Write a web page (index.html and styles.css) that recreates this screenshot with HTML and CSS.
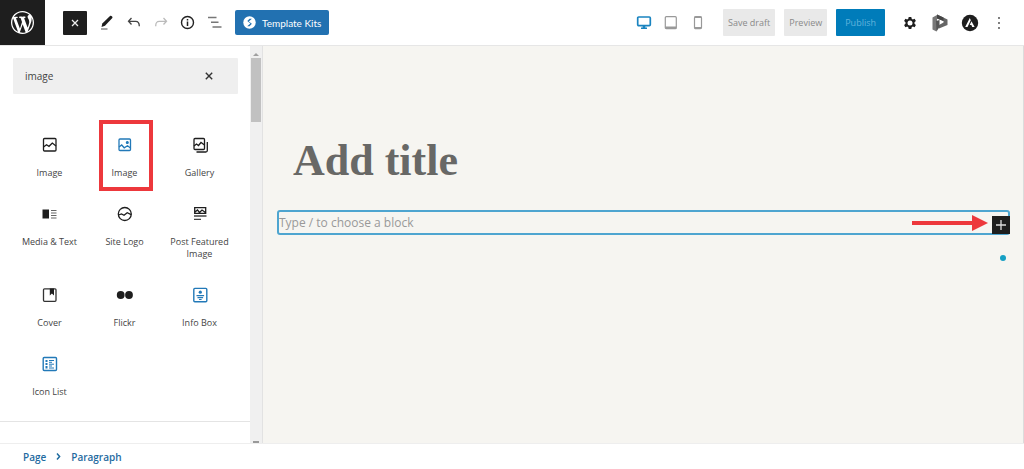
FILE: index.html
```html
<!DOCTYPE html>
<html lang="en">
<head>
  <meta charset="UTF-8">
  <meta name="viewport" content="width=device-width, initial-scale=1">
  <title>Edit Page</title>
  <link rel="stylesheet" href="styles.css">
</head>
<body>

<!-- Top toolbar -->
<header class="toolbar">
  <a href="#" class="wp-logo" aria-label="View pages">
    <svg width="23" height="23" viewBox="0 0 20 20" fill="#fff"><path d="M20 10c0-5.510-4.490-10-10-10C4.480 0 0 4.490 0 10c0 5.520 4.480 10 10 10 5.510 0 10-4.480 10-10zM7.780 15.370L4.370 6.220c.55-.02 1.170-.08 1.170-.08.5-.06.44-1.130-.06-1.110 0 0-1.450.11-2.370.11-.18 0-.37 0-.58-.01C4.120 2.690 6.870 1.110 10 1.110c2.330 0 4.450.87 6.050 2.340-.68-.11-1.650.39-1.650 1.580 0 .74.45 1.360.9 2.100.35.61.55 1.360.55 2.460 0 1.490-1.400 5-1.400 5l-3.030-8.370c.54-.02.82-.17.82-.17.5-.05.44-1.250-.06-1.220 0 0-1.440.12-2.380.12-.87 0-2.330-.12-2.330-.12-.5-.03-.56 1.200-.06 1.220l.92.08 1.260 3.410zM17.410 10c.24-.64.74-1.870.43-4.250.7 1.290 1.050 2.710 1.050 4.250 0 3.290-1.730 6.240-4.400 7.780.97-2.590 1.940-5.200 2.920-7.780zM6.100 18.090C3.120 16.650 1.110 13.530 1.110 10c0-1.300.23-2.480.72-3.590C3.250 10.300 4.670 14.200 6.100 18.090zm4.030-6.630l2.580 6.980c-.86.29-1.760.45-2.710.45-.79 0-1.570-.11-2.290-.33.81-2.380 1.620-4.740 2.420-7.100z"/></svg>
  </a>

  <div class="tools">
    <button class="icon-btn close-btn" aria-label="Close inserter">
      <svg width="8" height="8" viewBox="0 0 8 8"><path d="M1 1l6 6M7 1L1 7" stroke="#eee" stroke-width="1.300"/></svg>
    </button>
    <div class="tool-group">
      <button class="icon-btn" aria-label="Tools">
        <svg width="16" height="16" viewBox="0 0 16 16"><path d="M2.500 12l.8-3.500L11 .900c1-.8 3.200.9 2.300 2.200L6 10.800z" fill="#1e1e1e"/><path d="M2 14h6.500" stroke="#777" stroke-width="1.300"/></svg>
      </button>
      <button class="icon-btn" aria-label="Undo">
        <svg width="16" height="16" viewBox="0 0 16 16" fill="none" stroke="#444" stroke-width="1.300"><path d="M5.500 3L2.500 6.300l3 3.200M2.500 6.300h7.200c2.500 0 3.600 1.500 3.600 4.900"/></svg>
      </button>
      <button class="icon-btn" aria-label="Redo" disabled>
        <svg width="16" height="16" viewBox="0 0 16 16" fill="none" stroke="#bbb" stroke-width="1.300"><path d="M10.500 3l3 3.300-3 3.200M13.500 6.300H6.300c-2.500 0-3.600 1.500-3.600 4.900"/></svg>
      </button>
      <button class="icon-btn" aria-label="Details">
        <svg width="16" height="16" viewBox="0 0 16 16"><circle cx="7.500" cy="7.500" r="6" fill="none" stroke="#222" stroke-width="1.400"/><path d="M7.500 6.500v4.500M7.500 4v1.500" stroke="#222" stroke-width="1.500"/></svg>
      </button>
      <button class="icon-btn" aria-label="List view">
        <svg width="16" height="16" viewBox="0 0 16 16" stroke="#777" stroke-width="1.600"><path d="M1 2.500h8.500M4 7.200h7.500M5.500 12h9"/></svg>
      </button>
    </div>
    <button class="kits-btn">
      <svg width="13" height="13" viewBox="0 0 13 13"><circle cx="6.500" cy="6.500" r="6.200" fill="#fff"/><path d="M8.900 2.800H6.600L4.300 5.100 7.400 7.400 4.200 10.200h2.300l2.400-2.500-3.100-2.300z" fill="#2271b1"/></svg>
      Template Kits
    </button>
  </div>

  <div class="settings">
    <div class="tool-group">
      <button class="icon-btn" aria-label="Desktop">
        <svg width="16" height="16" viewBox="0 0 16 16"><rect x="1.700" y="2" width="12.600" height="8.600" rx="1" fill="none" stroke="#1a84c0" stroke-width="1.700"/><path d="M6.700 10.500h2.600v2h1.700v1.500H5v-1.500h1.700z" fill="#1a84c0"/></svg>
      </button>
      <button class="icon-btn" aria-label="Tablet">
        <svg width="16" height="16" viewBox="0 0 16 16"><rect x="2.300" y="1.700" width="11" height="12" rx="1" fill="none" stroke="#999" stroke-width="1.200"/><path d="M2.300 12.500h11" stroke="#999" stroke-width="2"/></svg>
      </button>
      <button class="icon-btn" aria-label="Mobile">
        <svg width="16" height="16" viewBox="0 0 16 16"><rect x="4.500" y="1.700" width="7" height="12" rx="1.200" fill="none" stroke="#999" stroke-width="1.200"/><path d="M4.500 2.200h7M4.500 12.700h7" stroke="#999" stroke-width="1.500"/></svg>
      </button>
    </div>
    <div class="actions">
      <button class="btn">Save draft</button>
      <button class="btn">Preview</button>
      <button class="btn btn-primary">Publish</button>
    </div>
    <div class="plugins">
      <button class="icon-btn" aria-label="Settings">
        <svg width="14" height="14" viewBox="0 0 14 14"><path d="M5.700 1h2.600l.4 1.800 1.100.6 1.800-.6 1.300 2.200L11.500 6.300v1.400l1.400 1.300-1.300 2.200-1.800-.6-1.100.6-.4 1.800H5.700l-.4-1.800-1.100-.6-1.800.6L1.100 9l1.400-1.300V6.300L1.100 5l1.300-2.200 1.800.6 1.100-.6z" fill="#1e1e1e"/><circle cx="7" cy="7" r="2.500" fill="#fff"/></svg>
      </button>
      <button class="icon-btn" aria-label="Page builder">
        <svg width="18" height="18" viewBox="0 0 18 18"><path d="M1.500 3.500L6 1v14.500L5.500 17.500l-4-2z" fill="#777"/><path d="M6 .500l10.500 5v5.500L8 14.500V11l4.500-2.500V7L6 4.500z" fill="#666"/><path d="M6 .500L12.500 3.500v3.500L6 4.500z" fill="#444"/><path d="M5 7l3.500-1v7L5.500 17.500z" fill="#555"/></svg>
      </button>
      <button class="icon-btn" aria-label="Astra settings">
        <svg width="18" height="18" viewBox="0 0 18 18"><circle cx="9" cy="9" r="8.200" fill="#1e1e1e"/><path d="M8.800 4L4.200 13h2.300l3.300-6.700zM10.500 7.300L8.700 11h1.700l.8 2h2.400z" fill="#fff"/></svg>
      </button>
      <button class="icon-btn more-btn" aria-label="Options">
        <svg width="4" height="14" viewBox="0 0 4 14" fill="#444"><circle cx="2" cy="2" r=".9"/><circle cx="2" cy="7" r=".9"/><circle cx="2" cy="12" r=".9"/></svg>
      </button>
    </div>
  </div>
</header>

<div class="workspace">

  <!-- Block inserter -->
  <aside class="inserter">
    <div class="inserter-content">
      <div class="search">
        <input type="text" class="search-input" value="image" aria-label="Search for blocks and patterns">
        <button class="icon-btn" aria-label="Reset search">
          <svg width="8" height="8" viewBox="0 0 8 8"><path d="M.8 .8l6.400 6.400M7.200 .8L.8 7.200" stroke="#333" stroke-width="1.400"/></svg>
        </button>
      </div>

      <div class="blocks">
        <button class="block">
          <svg width="24" height="24" viewBox="0 0 24 24" fill="none" stroke="#1e1e1e" stroke-width="1.300"><rect x="5.500" y="5.500" width="12.500" height="12.500" rx="1"/><path d="M5.500 14l3-2.300 2.500 1.600 3.300-3.300 3.700 3"/></svg>
          <span>Image</span>
        </button>
        <button class="block marked">
          <svg width="24" height="24" viewBox="0 0 24 24" fill="none" stroke="#2279b8" stroke-width="1.300"><rect x="6" y="6" width="11.500" height="11.500" rx="1"/><path d="M6 14l2.700-2 2.500 2.800 3.300-2 3 2.200"/><circle cx="14.300" cy="9.500" r=".9" fill="#2279b8"/></svg>
          <span>Image</span>
        </button>
        <button class="block">
          <svg width="24" height="24" viewBox="0 0 24 24" fill="none" stroke="#1e1e1e" stroke-width="1.300"><rect x="6" y="5.500" width="10.500" height="11" rx="1"/><path d="M6 13l2.500-2 2 1.500 2.500-3 3.500 2.500M19.300 9v8.500a1.500 1.500 0 0 1-1.500 1.500H8.500"/></svg>
          <span>Gallery</span>
        </button>
        <button class="block">
          <svg width="24" height="24" viewBox="0 0 24 24"><path d="M4.500 7.500h6.500v9H4.500z" fill="#1e1e1e"/><path d="M13 8.500h5.500M13 11h5.500M13 13.500h5.500M13 16h5.500" stroke="#666" stroke-width="1.100"/></svg>
          <span>Media &amp; Text</span>
        </button>
        <button class="block">
          <svg width="24" height="24" viewBox="0 0 24 24" fill="none" stroke="#1e1e1e" stroke-width="1.300"><circle cx="11.800" cy="12" r="6.500"/><path d="M5.500 13l3-1 2.500 1.300 3.200-2.600 4 2"/></svg>
          <span>Site Logo</span>
        </button>
        <button class="block">
          <svg width="24" height="24" viewBox="0 0 24 24" fill="none" stroke="#1e1e1e" stroke-width="1.300"><path d="M6.700 5.700h11v5.600h-11zM7 10l2.500-2 2 2.500 2.500-2.500 3.500 2.500"/><path d="M6 14h12.500M6 17.300h7" stroke="#444"/></svg>
          <span>Post Featured Image</span>
        </button>
        <button class="block">
          <svg width="24" height="24" viewBox="0 0 24 24"><rect x="5.500" y="5.800" width="12.500" height="12.500" rx="1" fill="none" stroke="#333" stroke-width="1.300"/><path d="M11.800 5.500h4.200v7l-2.100-1.900-2.100 1.900z" fill="#1e1e1e"/></svg>
          <span>Cover</span>
        </button>
        <button class="block">
          <svg width="24" height="24" viewBox="0 0 24 24" fill="#1e1e1e"><circle cx="7.700" cy="12" r="3.900"/><circle cx="16" cy="12" r="3.900"/></svg>
          <span>Flickr</span>
        </button>
        <button class="block">
          <svg width="24" height="24" viewBox="0 0 24 24"><rect x="5.800" y="5.400" width="13" height="13.400" rx="1" fill="none" stroke="#2279b8" stroke-width="1.400"/><circle cx="12.300" cy="9.200" r="1.600" fill="#2279b8"/><path d="M8.500 12.700h7.600M9.500 14.700h5.600M11 16.500h2.600" stroke="#2279b8" stroke-width="1.200"/></svg>
          <span>Info Box</span>
        </button>
        <button class="block">
          <svg width="24" height="24" viewBox="0 0 24 24"><rect x="5.200" y="5.500" width="13.300" height="13" rx="1" fill="none" stroke="#2279b8" stroke-width="1.400"/><path d="M7.500 8h2v2h-2zM7.500 11h2v2h-2zM7.500 14h2v2.500h-2z" fill="#2279b8"/><path d="M11 8.500h5M11 10.300h3M11 12.200h5M11 14h3M11 16h5" stroke="#2279b8" stroke-width="1"/></svg>
          <span>Icon List</span>
        </button>
      </div>
    </div>
    <div class="scrollbar">
      <i class="arrow-up"></i>
      <i class="thumb"></i>
      <i class="arrow-down"></i>
    </div>
  </aside>

  <!-- Editor canvas -->
  <main class="canvas">
    <input type="text" class="post-title" placeholder="Add title" aria-label="Add title">
    <div class="paragraph">
      <input type="text" class="paragraph-input" placeholder="Type / to choose a block" aria-label="Empty block">
      <svg class="pointer" width="76" height="16" viewBox="0 0 76 16" fill="#ed383c"><path d="M0 6h60V0l16 8-16 8v-6H0z"/></svg>
      <button class="add-block" aria-label="Add block">
        <svg width="10" height="10" viewBox="0 0 10 10"><path d="M5 0v10M0 5h10" stroke="#ddd" stroke-width="1.300"/></svg>
      </button>
    </div>
    <i class="dot"></i>
  </main>
</div>

<footer class="breadcrumb">
  <a href="#">Page</a>
  <svg width="5" height="7" viewBox="0 0 5 7"><path d="M1 .6l2.600 2.900L1 6.400" fill="none" stroke="#1f6b9f" stroke-width="1.500"/></svg>
  <a href="#">Paragraph</a>
</footer>

</body>
</html>
```
FILE: styles.css
```css
* { box-sizing: border-box; margin: 0; padding: 0; }

body {
  display: flex;
  flex-direction: column;
  height: 100vh;
  overflow: hidden;
  background: #fff;
  color: #444;
  font-family: "Open Sans", "Noto Sans", sans-serif;
  font-size: 9px;
}

button, input {
  border: 0;
  background: none;
  color: inherit;
  font: inherit;
}

button { cursor: pointer; }

svg { display: block; flex: none; }

/* Toolbar */
.toolbar {
  display: flex;
  align-items: center;
  justify-content: space-between;
  border-bottom: 1px solid #e6e6e6;
}

.wp-logo {
  display: flex;
  align-items: center;
  justify-content: center;
  width: 45px;
  height: 45px;
  background: #1e1e1e;
}

.tools {
  display: flex;
  align-items: center;
  flex: 1;
  gap: 8px;
  padding-left: 18px;
}

.tool-group {
  display: flex;
  gap: 3px;
}

.icon-btn {
  display: flex;
  align-items: center;
  justify-content: center;
  width: 24px;
  height: 24px;
}

.close-btn {
  background: #1e1e1e;
  border-radius: 1px;
}

.kits-btn {
  display: flex;
  align-items: center;
  gap: 6px;
  height: 25px;
  padding: 0 8px;
  border-radius: 2px;
  background: #2271b1;
  color: #fff;
  font-family: Lato, sans-serif;
  font-size: 10px;
}

.settings {
  display: flex;
  align-items: center;
  gap: 13px;
  padding-right: 14px;
}

.actions {
  display: flex;
  gap: 9px;
}

.btn {
  height: 27px;
  padding: 0 5px;
  border-radius: 1px;
  background: #e9e9e9;
  color: #8a8a8a;
  font-size: 9px;
}

.btn-primary {
  padding: 0 9px;
  background: #007cba;
  color: #62b4dc;
}

.plugins {
  display: flex;
  gap: 6px;
}

.more-btn { width: 22px; }

/* Inserter */
.workspace {
  display: flex;
  flex: 1;
  min-height: 0;
}

.inserter {
  display: flex;
  width: 263px;
  border-right: 1px solid #e2e2e2;
}

.inserter-content {
  flex: 1;
  overflow: hidden;
}

.search {
  display: flex;
  align-items: center;
  height: 36px;
  margin: 12px 12px 30px 13px;
  padding: 0 17px 0 12px;
  border-radius: 1px;
  background: #efefef;
}

.search-input {
  flex: 1;
  min-width: 0;
  font-size: 10px;
}

.blocks {
  display: grid;
  grid-template-columns: repeat(3, 1fr);
  padding: 0 13px 9px 12px;
  border-bottom: 1px solid #e4e4e4;
}

.block {
  display: flex;
  flex-direction: column;
  align-items: center;
  gap: 10px;
  padding: 9px 8px 14px;
  line-height: 12px;
}

/* Highlight frame around the block to pick */
.marked { position: relative; }

.marked::after {
  content: "";
  position: absolute;
  inset: -4px 9px 2px 12px;
  border: 4px solid #ed383c;
}

.scrollbar {
  display: flex;
  flex-direction: column;
  align-items: center;
  width: 12px;
  padding-top: 4px;
  background: #f0f0f0;
}

.arrow-up {
  border: 3px solid transparent;
  border-bottom-color: #a0a0a0;
}

.thumb {
  width: 10px;
  height: 64px;
  margin-top: 2px;
  background: #c1c1c1;
}

.arrow-down {
  width: 6px;
  height: 2px;
  margin-top: auto;
  background: #999;
}

/* Canvas */
.canvas {
  display: flex;
  flex-direction: column;
  flex: 1;
  padding: 88px 13px 0 14px;
  border-right: 1px solid #dcdcdc;
  background: #f6f5f1;
}

.post-title {
  width: 100%;
  height: 52px;
  padding-left: 16px;
  font-family: "Liberation Serif", serif;
  font-size: 44px;
  font-weight: bold;
}

.post-title::placeholder { color: #686866; }

.paragraph {
  display: flex;
  align-items: center;
  height: 25px;
  margin-top: 24px;
  border: 2px solid #4ea5d0;
  border-radius: 3px;
}

.paragraph-input {
  flex: 1;
  font-size: 12px;
}

.paragraph-input::placeholder { color: #999; }

.add-block {
  display: flex;
  align-items: center;
  justify-content: center;
  width: 18px;
  height: 18px;
  margin: 5px -2px 0 4px;
  background: #1e1e1e;
}

.dot {
  align-self: flex-end;
  width: 6px;
  height: 6px;
  margin: 20px 4px 0;
  border-radius: 50%;
  background: #16a0c4;
}

/* Breadcrumb */
.breadcrumb {
  display: flex;
  align-items: center;
  gap: 10px;
  height: 26px;
  padding-left: 23px;
  border-top: 1px solid #eee;
}

.breadcrumb a {
  color: #1f6b9f;
  font-size: 10px;
  font-weight: 600;
  text-decoration: none;
}
```
